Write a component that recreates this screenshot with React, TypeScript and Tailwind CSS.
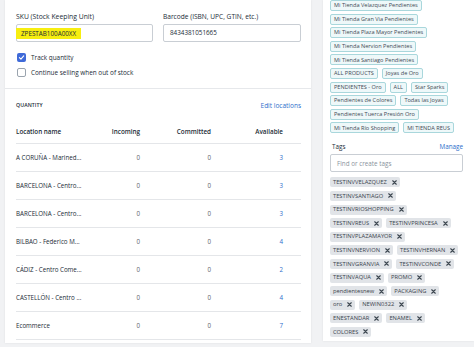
import React from 'react';

const rows = [
  { name: 'A CORUÑA - Marined...', incoming: 0, committed: 0, available: 3 },
  { name: 'BARCELONA - Centro...', incoming: 0, committed: 0, available: 3 },
  { name: 'BARCELONA - Centro...', incoming: 0, committed: 0, available: 3 },
  { name: 'BILBAO - Federico M...', incoming: 0, committed: 0, available: 4 },
  { name: 'CÁDIZ - Centro Come...', incoming: 0, committed: 0, available: 2 },
  { name: 'CASTELLÓN - Centro ...', incoming: 0, committed: 0, available: 4 },
  { name: 'Ecommerce', incoming: 0, committed: 0, available: 7 },
];

const collections = [
  ['Mi Tienda Velazquez Pendientes'],
  ['Mi Tienda Gran Via Pendientes'],
  ['Mi Tienda Plaza Mayor Pendientes'],
  ['Mi Tienda Nervion Pendientes'],
  ['Mi Tienda Santiago Pendientes'],
  ['ALL PRODUCTS', 'Joyas de Oro'],
  ['PENDIENTES - Oro', 'ALL', 'Star Sparks'],
  ['Pendientes de Colores', 'Todas las Joyas'],
  ['Pendientes Tuerca Presión Oro'],
  ['Mi Tienda Río Shopping', 'MI TIENDA REUS'],
];

const tags = [
  ['TESTINVVELAZQUEZ'],
  ['TESTINVSANTIAGO'],
  ['TESTINVRIOSHOPPING'],
  ['TESTINVREUS', 'TESTINVPRINCESA'],
  ['TESTINVPLAZAMAYOR'],
  ['TESTINVNERVION', 'TESTINVHERNAN'],
  ['TESTINVGRANVIA', 'TESTINVCONDE'],
  ['TESTINVAQUA', 'PROMO'],
  ['pendientesnew', 'PACKAGING'],
  ['oro', 'NEWIN0322'],
  ['ENESTANDAR', 'ENAMEL'],
  ['COLORES'],
];

const Checkbox = ({ checked }: { checked: boolean }) =>
  checked ? (
    <span className="w-[9px] h-[9px] rounded-[2px] bg-[#3f6ad8] flex items-center justify-center">
      <svg width="7" height="7" viewBox="0 0 10 10" fill="none">
        <path d="M2 5.2 4.2 7.4 8.2 2.8" stroke="#fff" strokeWidth="1.6" strokeLinecap="round" strokeLinejoin="round" />
      </svg>
    </span>
  ) : (
    <span className="w-[9px] h-[9px] rounded-[2px] border border-[#9aa4ae] bg-white" />
  );

const CloseX = () => (
  <svg width="5" height="5" viewBox="0 0 10 10" className="ml-[5px]">
    <path d="M1.5 1.5 8.5 8.5M8.5 1.5 1.5 8.5" stroke="#3d4750" strokeWidth="2.2" strokeLinecap="round" />
  </svg>
);

export default function App() {
  return (
    <div className="w-[474px] h-[347px] bg-[#f1f2f4] flex overflow-hidden text-[#212b36] font-['Open_Sans',sans-serif]">
      {/* left: inventory card */}
      <div className="pl-[5px] w-[311px] shrink-0">
        <div className="bg-white h-[343px] shadow-[0_0_2px_rgba(0,0,0,0.08)]">
          <div className="pl-[11px] pr-[10px] pt-[12px] pb-[11px] border-b border-[#e6e8eb]">
            <div className="flex gap-[10px]">
              <div className="flex-1">
                <div className="h-[9px] leading-[9px] text-[6.8px]">SKU (Stock Keeping Unit)</div>
                <div className="mt-[3px] h-[18px] border border-[#c9ced4] rounded-[2px] flex items-center">
                  <span className="ml-[-1px] h-[11px] px-[5px] bg-[#f7ee10] text-[6.3px] leading-[11px]">ZPESTAB100A00XX</span>
                </div>
              </div>
              <div className="w-[138px]">
                <div className="h-[9px] leading-[9px] text-[6.6px]">Barcode (ISBN, UPC, GTIN, etc.)</div>
                <div className="mt-[3px] h-[18px] border border-[#c9ced4] rounded-[2px] flex items-center pl-[6px] text-[6.3px]">
                  8434381051665
                </div>
              </div>
            </div>
            <div className="mt-[11px] flex items-center gap-[5px] h-[9px] pl-[1px]">
              <Checkbox checked />
              <span className="text-[6.4px]">Track quantity</span>
            </div>
            <div className="mt-[6px] flex items-center gap-[5px] h-[9px] pl-[1px]">
              <Checkbox checked={false} />
              <span className="text-[6.4px]">Continue selling when out of stock</span>
            </div>
          </div>

          <div className="pl-[11px] pr-[10px] pt-[12px]">
            <div className="flex justify-between items-center h-[10px]">
              <span className="text-[5.2px] font-semibold tracking-[0.1px]">QUANTITY</span>
              <span className="text-[6.5px] text-[#2c6ecb]">Edit locations</span>
            </div>
            <div className="grid grid-cols-[84px_40px_71px_72px_18px] items-center h-[33px] pt-[10px] border-b border-[#e4e6e9] text-[6.3px] font-semibold">
              <span>Location name</span>
              <span className="text-right">Incoming</span>
              <span className="text-right">Committed</span>
              <span className="text-right">Available</span>
              <span />
            </div>
            {rows.map((r, i) => (
              <div
                key={i}
                className="grid grid-cols-[84px_40px_71px_72px_18px] items-center h-[28px] border-b border-[#e4e6e9] text-[6.2px]"
              >
                <span className="whitespace-nowrap">{r.name}</span>
                <span className="text-right text-[#5a636c]">{r.incoming}</span>
                <span className="text-right text-[#5a636c]">{r.committed}</span>
                <span className="text-right text-[#2c6ecb]">{r.available}</span>
                <span />
              </div>
            ))}
          </div>
        </div>
      </div>

      {/* right: organization card */}
      <div className="ml-[12px] flex-1">
        <div className="bg-white h-[341px] pl-[7px] pr-[11px] shadow-[0_0_2px_rgba(0,0,0,0.08)]">
          <div className="flex flex-col gap-[2.6px]">
            {collections.map((row, i) => (
              <div key={i} className="flex gap-[4px]">
                {row.map((c) => (
                  <span
                    key={c}
                    className="h-[11px] px-[3px] flex items-center rounded-[2px] border border-[#a9d7dc] bg-[#eef8f9] text-[5.6px] text-[#3f4a55] whitespace-nowrap"
                  >
                    {c}
                  </span>
                ))}
              </div>
            ))}
          </div>

          <div className="mt-[9px] flex justify-between items-center h-[9px] pl-[2px]">
            <span className="text-[6.3px]">Tags</span>
            <span className="text-[6.3px] text-[#2c6ecb]">Manage</span>
          </div>
          <div className="mt-[3px] h-[18px] border border-[#c9ced4] rounded-[2px] flex items-center pl-[6px] text-[6.3px] text-[#8a939c]">
            Find or create tags
          </div>

          <div className="mt-[5px] flex flex-col gap-[3.6px]">
            {tags.map((row, i) => (
              <div key={i} className="flex gap-[4px]">
                {row.map((t) => (
                  <span
                    key={t}
                    className="h-[10px] pl-[3px] pr-[3px] flex items-center rounded-[2px] bg-[#e1e4e8] text-[5.75px] text-[#3a434c] whitespace-nowrap"
                  >
                    {t}
                    <CloseX />
                  </span>
                ))}
              </div>
            ))}
          </div>
        </div>
      </div>
    </div>
  );
}
